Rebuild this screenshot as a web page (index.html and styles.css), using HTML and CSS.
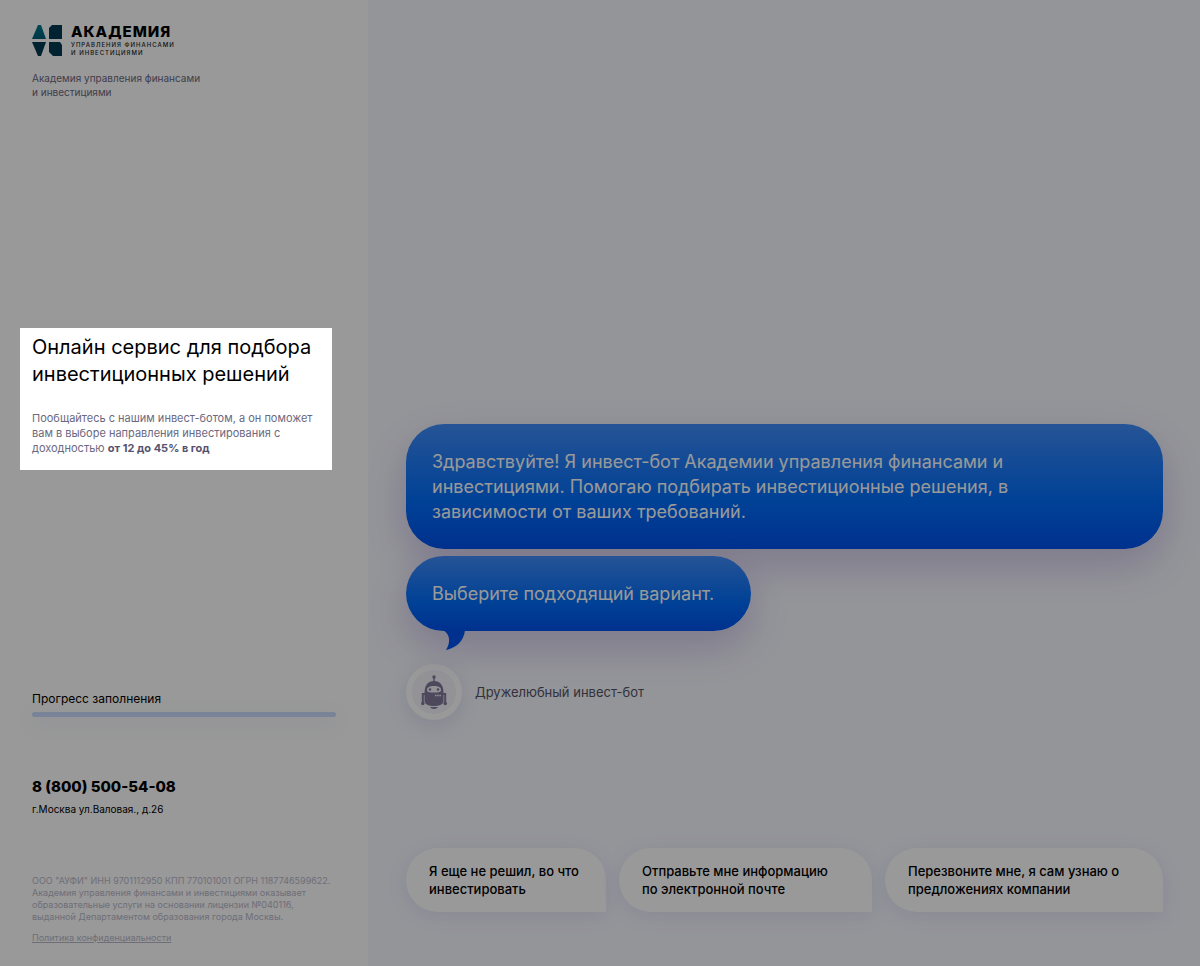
FILE: index.html
```
<!DOCTYPE html>
<html lang="ru">
<head>
    <meta charset="UTF-8">
    <meta name="viewport" content="width=device-width, initial-scale=1.0">
    <title>Академия управления финансами и инвестициями</title>
    <link rel="stylesheet" href="styles.css">
</head>
<body>
    <aside class="sidebar">
        <header>
            <div class="logo">
                <svg class="logo-mark" viewBox="0 0 30 32" aria-hidden="true">
                    <defs>
                        <linearGradient id="logoLight" x1="0" y1="0" x2="0" y2="1">
                            <stop offset="0" stop-color="#00788c"/>
                            <stop offset="1" stop-color="#005c74"/>
                        </linearGradient>
                    </defs>
                    <path d="M6 0h3L14 14H0z" fill="url(#logoLight)"/>
                    <path d="M20 0h10v14H17V3z" fill="#003a52"/>
                    <path d="M0 17h14L9 31H6z" fill="#003a52"/>
                    <path d="M17 17h11l2 3v11h-9l-4-4z" fill="#003a52"/>
                </svg>
                <div>
                    <div class="logo-name">АКАДЕМИЯ</div>
                    <div class="logo-sub">УПРАВЛЕНИЯ ФИНАНСАМИ<br>И ИНВЕСТИЦИЯМИ</div>
                </div>
            </div>
            <p class="tagline">Академия управления финансами<br>и инвестициями</p>
        </header>

        <!-- Highlighted block, its shadow dims the rest of the page -->
        <section class="intro">
            <h1>Онлайн сервис для подбора<br>инвестиционных решений</h1>
            <p>Пообщайтесь с нашим инвест-ботом, а он поможет<br>вам в выборе направления инвестирования с<br>доходностью <b>от 12 до 45% в год</b></p>
        </section>

        <section class="progress">
            <div id="progress-label">Прогресс заполнения</div>
            <div class="progress-bar" role="progressbar" aria-labelledby="progress-label" aria-valuenow="0"></div>
        </section>

        <section class="contacts">
            <div class="phone">8 (800) 500-54-08</div>
            <div class="address">г.Москва ул.Валовая., д.26</div>
        </section>

        <footer class="legal">
            <p>ООО "АУФИ" ИНН 9701112950 КПП 770101001 ОГРН 1187746599622.<br>Академия управления финансами и инвестициями оказывает<br>образовательные услуги на основании лицензии №040116,<br>выданной Департаментом образования города Москвы.</p>
            <a href="#">Политика конфиденциальности</a>
        </footer>
    </aside>

    <main class="chat">
        <div class="messages">
            <div class="bubble">Здравствуйте! Я инвест-бот Академии управления финансами и<br>инвестициями. Помогаю подбирать инвестиционные решения, в<br>зависимости от ваших требований.</div>
            <div class="bubble bubble-last">
                Выберите подходящий вариант.
                <svg class="tail" viewBox="0 0 24 20" aria-hidden="true">
                    <path d="M0 0C7 4 8 12 3 20C13 18 21 11 22 0z" fill="#0052ee"/>
                </svg>
            </div>
            <div class="bot">
                <div class="avatar">
                    <svg viewBox="0 0 26 34" aria-hidden="true">
                        <g fill="#82799a">
                            <circle cx="13" cy="2" r="1.700"/>
                            <path d="M12.300 2h1.400v5h-1.400z"/>
                            <path d="M3.500 18C3.500 10 7 6 13 6s9.500 4 9.500 12v8c0 3-4 5-9.500 5s-9.500-2-9.500-5z"/>
                            <path d="M9 32h8c-1 1-2 2-4 2s-3-1-4-2z"/>
                            <path d="M4 19H1.800V28M22 19h2.200V28" fill="none" stroke="#82799a" stroke-width="2"/>
                            <circle cx="1.800" cy="28.500" r="1.800"/>
                            <circle cx="24.200" cy="28.500" r="1.800"/>
                        </g>
                        <path d="M6 15c0-3 3-4 7-4s7 1 7 4c0 2-2 2.500-7 2.500S6 17 6 15z" fill="#f2f2fa"/>
                        <circle cx="9" cy="14.500" r="1.300" fill="#82799a"/>
                        <circle cx="17" cy="14.500" r="1.300" fill="#82799a"/>
                        <path d="M14 20.500h6" stroke="#f2f2fa" stroke-width="1.500" stroke-dasharray="1.500 .7"/>
                    </svg>
                </div>
                <span>Дружелюбный инвест-бот</span>
            </div>
        </div>
        <div class="answers">
            <button type="button">Я еще не решил, во что<br>инвестировать</button>
            <button type="button">Отправьте мне информацию<br>по электронной почте</button>
            <button type="button">Перезвоните мне, я сам узнаю о<br>предложениях компании</button>
        </div>
    </main>
</body>
</html>
```

FILE: styles.css
```
* {
    box-sizing: border-box;
}

body {
    margin: 0;
    display: grid;
    grid-template-columns: 368px 1fr;
    min-height: 100vh;
    font-family: Inter, "Open Sans", sans-serif;
    color: #000;
    background-color: #f7f8ff;
}

p,
h1 {
    margin: 0;
}

/* Sidebar */
.sidebar {
    display: flex;
    flex-direction: column;
    padding: 24px 32px 22px;
    background-color: #fff;
    white-space: nowrap;
}

.sidebar header {
    padding-bottom: 8px;
}

.logo {
    display: flex;
    gap: 9px;
}

.logo-mark {
    width: 30px;
    height: 32px;
    margin-top: 1px;
}

.logo-name {
    font-size: 15px;
    line-height: 16px;
    font-weight: 800;
    letter-spacing: 1px;
}

.logo-sub {
    padding-top: 1px;
    font-size: 6px;
    line-height: 8px;
    font-weight: 500;
    letter-spacing: 1px;
    color: #222;
}

.tagline {
    margin-top: 14px;
    font-size: 10px;
    line-height: 14px;
    color: #6b6880;
}

.intro {
    position: relative;
    z-index: 1;
    margin: auto 4px auto -12px;
    padding: 6px 12px 14px;
    background-color: #fff;
    box-shadow: 0 0 0 9999px rgba(0, 0, 0, 0.4);
}

.intro h1 {
    font-size: 20px;
    line-height: 27px;
    font-weight: 400;
}

.intro p {
    margin-top: 23px;
    font-size: 11px;
    line-height: 15px;
    color: #6b6880;
}

.intro b {
    color: #55526e;
}

.progress {
    font-size: 12px;
    line-height: 16px;
}

.progress-bar {
    height: 5px;
    margin-top: 5px;
    border-radius: 3px;
    background-color: #ccdcff;
    box-shadow: 0 6px 20px rgba(80, 110, 200, 0.15);
}

.contacts {
    margin-top: 58px;
}

.phone {
    font-size: 15px;
    line-height: 24px;
    font-weight: 800;
}

.address {
    margin-top: 2px;
    font-size: 10px;
    line-height: 16px;
}

.legal {
    margin-top: 58px;
    font-size: 9px;
    line-height: 12px;
    color: #b9b8c8;
}

.legal a {
    display: inline-block;
    margin-top: 9px;
    color: inherit;
}

/* Chat */
.chat {
    display: flex;
    flex-direction: column;
    justify-content: flex-end;
    padding: 32px 37px 54px 38px;
}

.messages {
    display: flex;
    flex-direction: column;
    align-items: flex-start;
    gap: 7px;
}

.bubble {
    width: 100%;
    padding: 25px 37px 25px 26px;
    border-radius: 38px;
    font-size: 18px;
    line-height: 25px;
    color: #fff;
    background: linear-gradient(#408cfa, #006dfa 62%, #0052ee);
    box-shadow: 0 16px 40px rgba(60, 20, 150, 0.2);
}

.bubble-last {
    position: relative;
    width: auto;
}

.tail {
    position: absolute;
    left: 37px;
    top: calc(100% - 1px);
    width: 24px;
    height: 20px;
}

.bot {
    display: flex;
    align-items: center;
    gap: 13px;
    margin-top: 26px;
    font-size: 13px;
    color: #55535f;
}

.avatar {
    display: flex;
    align-items: center;
    justify-content: center;
    width: 56px;
    height: 56px;
    border: 6px solid #fff;
    border-radius: 50%;
    background-color: #f5f5fc;
    box-shadow: 0 6px 20px rgba(80, 90, 170, 0.15);
}

.avatar svg {
    width: 26px;
    height: 34px;
}

.answers {
    display: grid;
    grid-template-columns: 200fr 253fr 278fr;
    gap: 13px;
    margin-top: 128px;
}

.answers button {
    padding: 14px 0 14px 23px;
    border: 0;
    border-radius: 32px 32px 0 32px;
    font-family: inherit;
    font-size: 13px;
    line-height: 18px;
    font-weight: 500;
    text-align: left;
    color: #000;
    background-color: #fff;
    box-shadow: 0 4px 20px rgba(80, 90, 200, 0.12);
    cursor: pointer;
}
```
